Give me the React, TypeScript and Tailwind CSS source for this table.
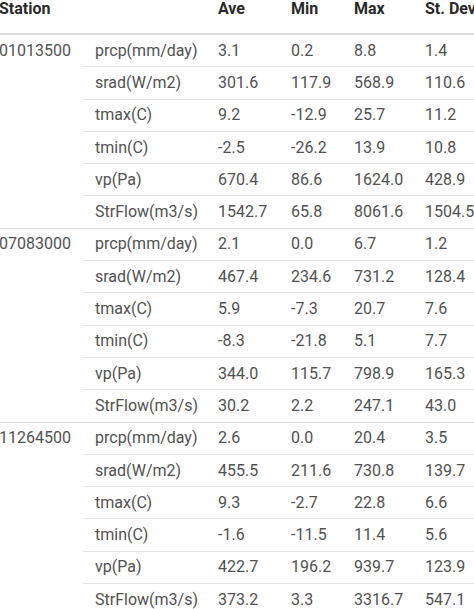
import React from "react";

type Row = [string, string, string, string, string];

const groups: { station: string; rows: Row[] }[] = [
  {
    station: "01013500",
    rows: [
      ["prcp(mm/day)", "3.1", "0.2", "8.8", "1.4"],
      ["srad(W/m2)", "301.6", "117.9", "568.9", "110.6"],
      ["tmax(C)", "9.2", "-12.9", "25.7", "11.2"],
      ["tmin(C)", "-2.5", "-26.2", "13.9", "10.8"],
      ["vp(Pa)", "670.4", "86.6", "1624.0", "428.9"],
      ["StrFlow(m3/s)", "1542.7", "65.8", "8061.6", "1504.5"],
    ],
  },
  {
    station: "07083000",
    rows: [
      ["prcp(mm/day)", "2.1", "0.0", "6.7", "1.2"],
      ["srad(W/m2)", "467.4", "234.6", "731.2", "128.4"],
      ["tmax(C)", "5.9", "-7.3", "20.7", "7.6"],
      ["tmin(C)", "-8.3", "-21.8", "5.1", "7.7"],
      ["vp(Pa)", "344.0", "115.7", "798.9", "165.3"],
      ["StrFlow(m3/s)", "30.2", "2.2", "247.1", "43.0"],
    ],
  },
  {
    station: "11264500",
    rows: [
      ["prcp(mm/day)", "2.6", "0.0", "20.4", "3.5"],
      ["srad(W/m2)", "455.5", "211.6", "730.8", "139.7"],
      ["tmax(C)", "9.3", "-2.7", "22.8", "6.6"],
      ["tmin(C)", "-1.6", "-11.5", "11.4", "5.6"],
      ["vp(Pa)", "422.7", "196.2", "939.7", "123.9"],
      ["StrFlow(m3/s)", "373.2", "3.3", "3316.7", "547.1"],
    ],
  },
];

export default function App() {
  return (
    <div
      className="w-[474px] h-[609px] overflow-hidden bg-white text-[16px] text-[#525252]"
      style={{ fontFamily: "Roboto, 'Liberation Sans', sans-serif" }}
    >
      <div className="-ml-[13px] w-[506px]">
        {/* header */}
        <div className="flex h-[35px] border-b-2 border-[#dcdcdc] font-bold text-[#2a2a2a] leading-[18px]">
          <div className="w-[96px] px-3">Station</div>
          <div className="w-[123px] px-3"></div>
          <div className="w-[73px] px-3">Ave</div>
          <div className="w-[63px] px-3">Min</div>
          <div className="w-[71px] px-3">Max</div>
          <div className="w-[80px] px-3 whitespace-nowrap">St. Dev</div>
        </div>

        {groups.map((g) => (
          <div key={g.station} className="flex border-b border-[#dcdcdc]">
            <div className="w-[96px] px-3 h-[31.3px] flex items-center">{g.station}</div>
            <div className="flex-1">
              {g.rows.map((r, i) => (
                <div
                  key={r[0]}
                  className={
                    i < 5
                      ? "flex items-center h-[32.3px] border-b border-[#e4e4e4]"
                      : "flex items-center h-[31.3px]"
                  }
                >
                  <div className="w-[123px] px-3 whitespace-nowrap">{r[0]}</div>
                  <div className="w-[73px] px-3">{r[1]}</div>
                  <div className="w-[63px] px-3">{r[2]}</div>
                  <div className="w-[71px] px-3">{r[3]}</div>
                  <div className="w-[80px] px-3 whitespace-nowrap">{r[4]}</div>
                </div>
              ))}
            </div>
          </div>
        ))}
      </div>
    </div>
  );
}
